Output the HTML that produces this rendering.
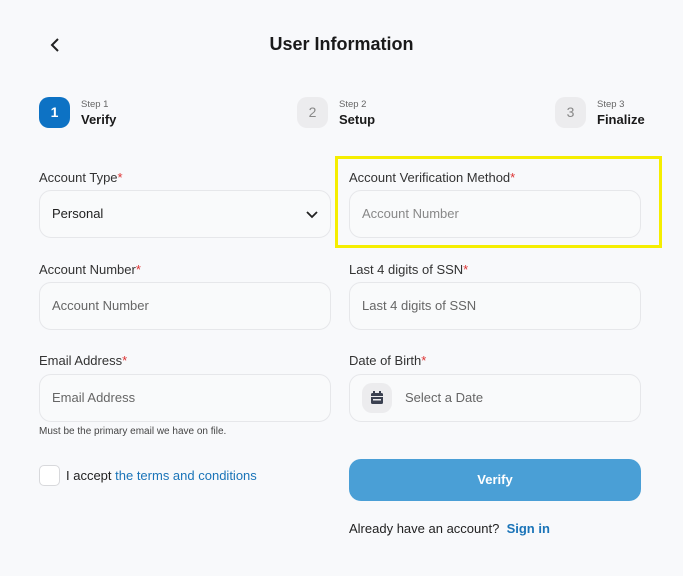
<!DOCTYPE html>
<html><head><style>
*{box-sizing:border-box;margin:0;padding:0}
body{width:683px;height:576px;background:#f8f9fb;font-family:"Liberation Sans",sans-serif;color:#222;position:relative;overflow:hidden}
.a{position:absolute}
.title{left:0;width:683px;top:34px;text-align:center;font-size:18px;font-weight:bold;color:#1a1a1a}
.sc{width:31px;height:31px;border-radius:10px;background:#ececee;color:#888;font-size:14px;text-align:center;line-height:31px;top:97px}
.sc.on{background:#0d72c4;color:#fff;font-weight:bold}
.sl{font-size:9.5px;color:#666;top:99px}
.sn{font-size:13px;font-weight:bold;color:#1a1a1a;top:112px}
.lb{font-size:13px;color:#333}
.lb i{color:#d33;font-style:normal}
.in{width:292px;height:48px;border:1px solid #e6e7ea;border-radius:12px;background:#f9fafb;font-size:13px;color:#666;line-height:46px;padding-left:12px}
</style></head><body>
<svg class="a" style="left:48px;top:37px" width="14" height="16" viewBox="0 0 14 16"><path d="M10 2L4 8l6 6" fill="none" stroke="#222" stroke-width="2"/></svg>
<div class="a title">User Information</div>

<div class="a sc on" style="left:39px">1</div>
<div class="a sl" style="left:81px">Step 1</div><div class="a sn" style="left:81px">Verify</div>
<div class="a sc" style="left:297px">2</div>
<div class="a sl" style="left:339px">Step 2</div><div class="a sn" style="left:339px">Setup</div>
<div class="a sc" style="left:555px">3</div>
<div class="a sl" style="left:597px">Step 3</div><div class="a sn" style="left:597px">Finalize</div>

<div class="a lb" style="left:39px;top:170px">Account Type<i>*</i></div>
<div class="a in" style="left:39px;top:190px;color:#222">Personal
<svg class="a" style="left:266px;top:19px" width="12" height="10" viewBox="0 0 12 10"><path d="M1 2l5 5 5-5" fill="none" stroke="#222" stroke-width="1.8"/></svg></div>

<div class="a" style="left:335px;top:156px;width:327px;height:92px;border:3px solid #f5ee00"></div>
<div class="a lb" style="left:349px;top:170px">Account Verification Method<i>*</i></div>
<div class="a in" style="left:349px;top:190px;color:#888">Account Number</div>

<div class="a lb" style="left:39px;top:262px">Account Number<i>*</i></div>
<div class="a in" style="left:39px;top:282px">Account Number</div>
<div class="a lb" style="left:349px;top:262px">Last 4 digits of SSN<i>*</i></div>
<div class="a in" style="left:349px;top:282px">Last 4 digits of SSN</div>

<div class="a lb" style="left:39px;top:353px">Email Address<i>*</i></div>
<div class="a in" style="left:39px;top:374px">Email Address</div>
<div class="a" style="left:39px;top:426px;font-size:10px;color:#444">Must be the primary email we have on file.</div>
<div class="a lb" style="left:349px;top:353px">Date of Birth<i>*</i></div>
<div class="a in" style="left:349px;top:374px;padding-left:55px">Select a Date
<div class="a" style="left:12px;top:8px;width:30px;height:30px;border-radius:10px;background:#ececee"></div>
<svg class="a" style="left:20px;top:16px" width="14" height="14" viewBox="0 0 14 14"><rect x="1" y="2" width="12" height="11" rx="1.5" fill="#3a4050"/><rect x="3" y="0" width="2" height="3" fill="#3a4050"/><rect x="9" y="0" width="2" height="3" fill="#3a4050"/><rect x="3" y="8" width="8" height="1.5" fill="#ececee"/><rect x="1" y="5" width="12" height="1" fill="#ececee"/></svg></div>

<div class="a" style="left:39px;top:465px;width:21px;height:21px;border:1px solid #d8d9dc;border-radius:5px;background:#fff"></div>
<div class="a" style="left:66px;top:468px;font-size:13px;color:#222">I accept <span style="color:#1a74b8">the terms and conditions</span></div>

<div class="a" style="left:349px;top:459px;width:292px;height:42px;border-radius:12px;background:#4a9fd6;color:#fff;font-weight:bold;font-size:13px;text-align:center;line-height:42px">Verify</div>
<div class="a" style="left:349px;top:521px;font-size:13px;color:#222">Already have an account? &nbsp;<b style="color:#1a74b8">Sign in</b></div>
</body></html>
